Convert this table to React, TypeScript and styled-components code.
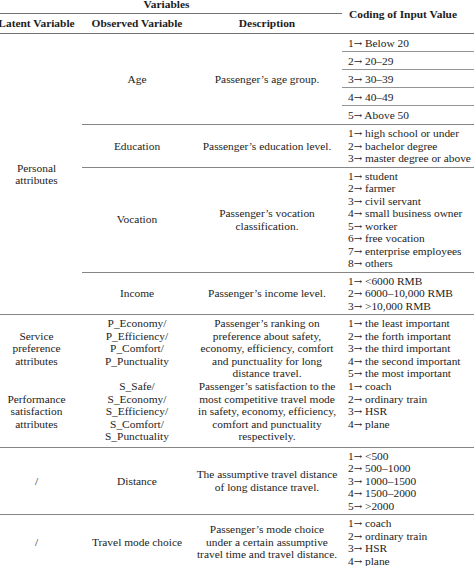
import React from "react";
import styled, { createGlobalStyle } from "styled-components";

const GlobalStyle = createGlobalStyle`
  html, body {
    margin: 0;
    padding: 0;
    background: #ffffff;
  }
`;

const ageCodes = ["Below 20", "20–29", "30–39", "40–49", "Above 50"];
const educationCodes = ["high school or under", "bachelor degree", "master degree or above"];
const vocationCodes = [
  "student",
  "farmer",
  "civil servant",
  "small business owner",
  "worker",
  "free vocation",
  "enterprise employees",
  "others",
];
const incomeCodes = ["<6000 RMB", "6000–10,000 RMB", ">10,000 RMB"];
const rankCodes = [
  "the least important",
  "the forth important",
  "the third important",
  "the second important",
  "the most important",
];
const modeCodes = ["coach", "ordinary train", "HSR", "plane"];
const distanceCodes = ["<500", "500–1000", "1000–1500", "1500–2000", ">2000"];

const Lines = ({ items }: { items: string[] }) => (
  <>
    {items.map((t, i) => (
      <Line key={i}>{t}</Line>
    ))}
  </>
);

const Code = ({ n, text }: { n: number; text: string }) => (
  <>
    {n}
    <Arrow>→</Arrow> {text}
  </>
);

const Codes = ({ items }: { items: string[] }) => (
  <>
    {items.map((t, i) => (
      <Line key={i}>
        <Code n={i + 1} text={t} />
      </Line>
    ))}
  </>
);

export default function App() {
  return (
    <Page>
      <GlobalStyle />
      <Table>
        <colgroup>
          <col style={{ width: 91 }} />
          <col style={{ width: 110 }} />
          <col style={{ width: 150 }} />
          <col style={{ width: 139 }} />
        </colgroup>
        <thead>
          <tr>
            <Th colSpan={3} $rule $h={17}>
              Variables
            </Th>
            <Th rowSpan={2} $rule $left>
              Coding of Input Value
            </Th>
          </tr>
          <tr>
            <Th $rule $h={19}>Latent Variable</Th>
            <Th $rule>Observed Variable</Th>
            <Th $rule>Description</Th>
          </tr>
        </thead>
        <tbody>
          <tr>
            <Td rowSpan={4} $rule>
              <Lines items={["Personal", "attributes"]} />
            </Td>
            <Td $rule>Age</Td>
            <Td $rule>Passenger’s age group.</Td>
            <CodeTd $rule $flush>
              {ageCodes.map((t, i) => (
                <AgeItem key={i}>
                  <Code n={i + 1} text={t} />
                </AgeItem>
              ))}
            </CodeTd>
          </tr>
          <tr>
            <Td $rule>Education</Td>
            <Td $rule>Passenger’s education level.</Td>
            <CodeTd $rule>
              <Codes items={educationCodes} />
            </CodeTd>
          </tr>
          <tr>
            <Td $rule>Vocation</Td>
            <Td $rule>
              <Lines items={["Passenger’s vocation", "classification."]} />
            </Td>
            <CodeTd $rule>
              <Codes items={vocationCodes} />
            </CodeTd>
          </tr>
          <tr>
            <Td $rule>Income</Td>
            <Td $rule>Passenger’s income level.</Td>
            <CodeTd $rule>
              <Codes items={incomeCodes} />
            </CodeTd>
          </tr>
          <tr>
            <Td $pb={0}>
              <Lines items={["Service", "preference", "attributes"]} />
            </Td>
            <Td $pb={0} $top>
              <Lines items={["P_Economy/", "P_Efficiency/", "P_Comfort/", "P_Punctuality"]} />
            </Td>
            <Td $pb={0} $top>
              <Lines
                items={[
                  "Passenger’s ranking on",
                  "preference about safety,",
                  "economy, efficiency, comfort",
                  "and punctuality for long",
                  "distance travel.",
                ]}
              />
            </Td>
            <CodeTd $pb={0}>
              <Codes items={rankCodes} />
            </CodeTd>
          </tr>
          <tr>
            <Td $rule $pt={0.5} $pb={4}>
              <Lines items={["Performance", "satisfaction", "attributes"]} />
            </Td>
            <Td $rule $pt={0.5} $pb={4} $top>
              <Lines items={["S_Safe/", "S_Economy/", "S_Efficiency/", "S_Comfort/", "S_Punctuality"]} />
            </Td>
            <Td $rule $pt={0.5} $pb={4} $top>
              <Lines
                items={[
                  "Passenger’s satisfaction to the",
                  "most competitive travel mode",
                  "in safety, economy, efficiency,",
                  "comfort and punctuality",
                  "respectively.",
                ]}
              />
            </Td>
            <CodeTd $rule $pt={0.5} $pb={4}>
              <Codes items={modeCodes} />
            </CodeTd>
          </tr>
          <tr>
            <Td $rule>/</Td>
            <Td $rule>Distance</Td>
            <Td $rule>
              <Lines items={["The assumptive travel distance", "of long distance travel."]} />
            </Td>
            <CodeTd $rule>
              <Codes items={distanceCodes} />
            </CodeTd>
          </tr>
          <tr>
            <Td>/</Td>
            <Td>Travel mode choice</Td>
            <Td>
              <Lines
                items={[
                  "Passenger’s mode choice",
                  "under a certain assumptive",
                  "travel time and travel distance.",
                ]}
              />
            </Td>
            <CodeTd>
              <Codes items={modeCodes} />
            </CodeTd>
          </tr>
        </tbody>
      </Table>
    </Page>
  );
}

const Page = styled.div`
  width: 474px;
  height: 566px;
  overflow: hidden;
  background: #ffffff;
  font-family: "Liberation Serif", "Times New Roman", serif;
  color: #1d1d1d;
`;

const Table = styled.table`
  margin: -4px 0 0 -9px;
  width: 490px;
  table-layout: fixed;
  border-collapse: collapse;
  font-size: 11.4px;
  line-height: 12.5px;
`;

const Th = styled.th<{ $rule?: boolean; $left?: boolean; $h?: number }>`
  height: ${(p) => (p.$h ? `${p.$h}px` : "auto")};
  padding: 0 4px;
  font-size: 11.4px;
  font-weight: 700;
  white-space: nowrap;
  text-align: ${(p) => (p.$left ? "left" : "center")};
  padding-left: ${(p) => (p.$left ? "7px" : "4px")};
  vertical-align: middle;
  border-bottom: ${(p) => (p.$rule ? "1px solid #737373" : "none")};
`;

const Td = styled.td<{ $rule?: boolean; $top?: boolean; $pt?: number; $pb?: number }>`
  padding: ${(p) => p.$pt ?? 2}px 4px ${(p) => p.$pb ?? 2}px;
  text-align: center;
  vertical-align: ${(p) => (p.$top ? "top" : "middle")};
  white-space: nowrap;
  border-bottom: ${(p) => (p.$rule ? "1px solid #868686" : "none")};
`;

const CodeTd = styled(Td)<{ $flush?: boolean }>`
  text-align: left;
  vertical-align: top;
  padding-left: ${(p) => (p.$flush ? 0 : 6)}px;
  padding-top: ${(p) => (p.$flush ? 0 : p.$pt ?? 2)}px;
  padding-bottom: ${(p) => (p.$flush ? 0 : p.$pb ?? 2)}px;
`;

const Line = styled.div`
  height: 12.5px;
  white-space: nowrap;
`;

const Arrow = styled.span`
  font-family: "DejaVu Serif", serif;
  font-size: 10px;
  line-height: 0;
`;

const AgeItem = styled.div`
  height: 18px;
  line-height: 18px;
  padding-left: 6px;
  border-bottom: 1px solid #949494;
  box-sizing: border-box;

  &:last-child {
    border-bottom: none;
  }
`;
